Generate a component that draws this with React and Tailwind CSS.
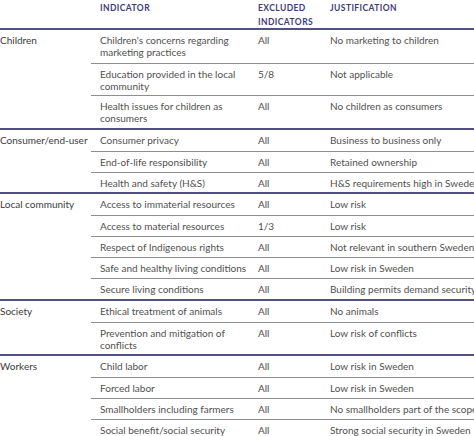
import React from 'react';

const groups = [
  {
    name: 'Children',
    rows: [
      [["Children's concerns regarding", 'marketing practices'], 'All', 'No marketing to children'],
      [['Education provided in the local', 'community'], '5/8', 'Not applicable'],
      [['Health issues for children as', 'consumers'], 'All', 'No children as consumers'],
    ],
  },
  {
    name: 'Consumer/end-user',
    rows: [
      [['Consumer privacy'], 'All', 'Business to business only'],
      [['End-of-life responsibility'], 'All', 'Retained ownership'],
      [['Health and safety (H&S)'], 'All', 'H&S requirements high in Sweden'],
    ],
  },
  {
    name: 'Local community',
    rows: [
      [['Access to immaterial resources'], 'All', 'Low risk'],
      [['Access to material resources'], '1/3', 'Low risk'],
      [['Respect of Indigenous rights'], 'All', 'Not relevant in southern Sweden'],
      [['Safe and healthy living conditions'], 'All', 'Low risk in Sweden'],
      [['Secure living conditions'], 'All', 'Building permits demand security'],
    ],
  },
  {
    name: 'Society',
    rows: [
      [['Ethical treatment of animals'], 'All', 'No animals'],
      [['Prevention and mitigation of', 'conflicts'], 'All', 'Low risk of conflicts'],
    ],
  },
  {
    name: 'Workers',
    rows: [
      [['Child labor'], 'All', 'Low risk in Sweden'],
      [['Forced labor'], 'All', 'Low risk in Sweden'],
      [['Smallholders including farmers'], 'All', 'No smallholders part of the scope'],
      [['Social benefit/social security'], 'All', 'Strong social security in Sweden'],
    ],
  },
];

const Row = ({ row, first }) => {
  const [lines, excluded, why] = row;
  const tall = lines.length > 1;
  return (
    <div
      className={
        'flex ' +
        (first ? '' : 'border-t-[1.5px] border-[#8e8e8e] ') +
        (tall ? 'h-[32.6px]' : 'h-[20.9px]')
      }
    >
      <div className="w-[158px] shrink-0 pl-[9px] pt-[4px] whitespace-nowrap">
        {lines.map((l) => (
          <div key={l}>{l}</div>
        ))}
      </div>
      <div className="w-[72px] shrink-0 pl-[9px] pt-[4px]">{excluded}</div>
      <div className="flex-1 pl-[9px] pt-[4px] whitespace-nowrap">{why}</div>
    </div>
  );
};

export default function App() {
  return (
    <div className="w-[474px] h-[436px] overflow-hidden bg-white">
      <div
        className="w-[500px] text-[10px] leading-[12px] text-[#505050]"
        style={{ fontFamily: 'Lato, "Liberation Sans", sans-serif' }}
      >
        <div className="flex h-[28px] pt-[1px] text-[8.5px] leading-[14px] font-bold tracking-[0.05em] text-[#3d3c78]">
          <div className="w-[91px] shrink-0" />
          <div className="w-[158px] shrink-0 pl-[9px]">INDICATOR</div>
          <div className="w-[72px] shrink-0 pl-[9px]">
            EXCLUDED
            <br />
            INDICATORS
          </div>
          <div className="flex-1 pl-[9px]">JUSTIFICATION</div>
        </div>
        {groups.map((g) => (
          <div key={g.name} className="flex border-t-2 border-[#524f82]">
            <div className="w-[91px] shrink-0 pt-[4px] text-[#3c3c3c]">{g.name}</div>
            <div className="flex-1">
              {g.rows.map((r, i) => (
                <Row key={r[0][0]} row={r} first={i === 0} />
              ))}
            </div>
          </div>
        ))}
      </div>
    </div>
  );
}
